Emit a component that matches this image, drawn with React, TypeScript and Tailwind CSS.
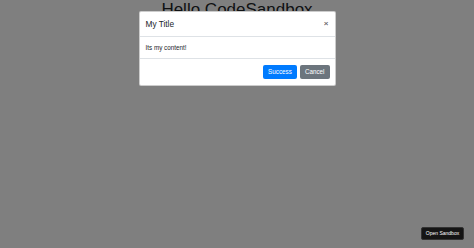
export default function App() {
  return (
    <div
      className="relative h-[248px] w-full overflow-hidden bg-white"
      style={{ fontFamily: '"Liberation Sans", Arial, sans-serif' }}
    >
      <h1 className="text-center text-[17px] leading-[20px] text-[#212529]">Hello CodeSandbox</h1>

      {/* backdrop */}
      <div className="absolute inset-0 bg-black/50" />

      {/* modal */}
      <div className="absolute inset-x-0 top-[11px] flex justify-center">
        <div className="w-[197px] overflow-hidden rounded-[2px] border border-black/20 bg-white text-[#212529]">
          <div className="flex items-center justify-between border-b border-[#dee2e6] px-[6px] py-[6px]">
            <span className="text-[8.3px] leading-[12px]">My Title</span>
            <span className="text-[8px] font-bold leading-[12px] text-black/60">×</span>
          </div>
          <div className="px-[6px] py-[6px] text-[6.3px] leading-[9px]">Its my content!</div>
          <div className="flex justify-end gap-[3px] border-t border-[#dee2e6] px-[5px] py-[6px]">
            <button className="h-[14px] rounded-[2px] bg-[#007bff] px-[5px] text-[6.3px] text-white">Success</button>
            <button className="h-[14px] rounded-[2px] bg-[#6c757d] px-[5px] text-[6.3px] text-white">Cancel</button>
          </div>
        </div>
      </div>

      <button className="absolute right-[10px] bottom-[8px] h-[13px] w-[43px] rounded-[2px] border border-[#333] bg-[#151515] text-[5px] text-white">
        Open Sandbox
      </button>
    </div>
  );
}
